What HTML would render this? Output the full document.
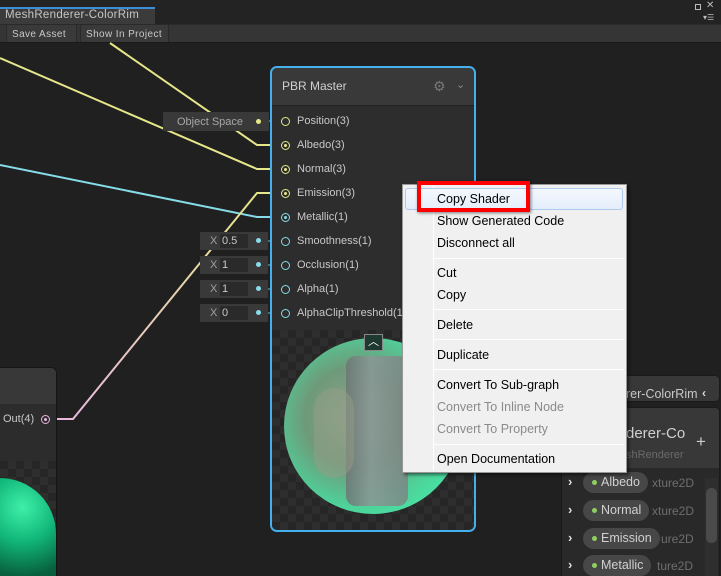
<!DOCTYPE html>
<html><head><meta charset="utf-8"><style>
*{margin:0;padding:0;box-sizing:border-box}
html,body{width:721px;height:576px;overflow:hidden}
body{background:#202020;font-family:"Liberation Sans","DejaVu Sans",sans-serif;position:relative;color:#c4c4c4}
.a{position:absolute}
.port{position:absolute;left:297px;font-size:11px;color:#c8c8c8}
.pc{position:absolute;left:281px;width:9px;height:9px;border-radius:50%;border:1.5px solid #e8e88a}
.pc.c{border-color:#86dde8}
.pc.f::after{content:"";position:absolute;left:1.5px;top:1.5px;width:3px;height:3px;border-radius:50%;background:#e8e88a}
.pc.c.f::after{background:#86dde8}
.inp{position:absolute;left:200px;width:68px;height:18px;background:#393939;font-size:11px;color:#a0a0a0}
.inp span{position:absolute;left:20px;top:2px;width:28px;height:14px;background:#2a2a2a;padding:1px 0 0 2px;color:#c8c8c8}
.inp b{position:absolute;left:10px;top:3px;font-weight:normal}
.inp i{position:absolute;left:56px;top:6px;width:5px;height:5px;border-radius:50%;background:#86dde8}
.mi{position:absolute;left:437px;font-size:12.5px;color:#000}
.mi.d{color:#8a8a8a}
.sep{position:absolute;left:434px;width:190px;height:1px;background:#d6d6d6;border-bottom:1px solid #fff}
.pill{position:absolute;left:583px;height:21px;border-radius:11px;background:#474747;font-size:12.5px;line-height:15px;color:#d0d0d0;padding:3px 8px 0 18px}
.pill::before{content:"";position:absolute;left:9px;top:8px;width:5px;height:5px;border-radius:50%;background:#8ed060}
.chev{position:absolute;left:568px;font-size:13px;line-height:15px;color:#ddd;font-weight:bold}
.ty{position:absolute;font-size:12px;line-height:14px;color:#6e6e6e}
.chk{background-color:#262626;background-image:linear-gradient(45deg,#2e2e2e 25%,transparent 25%,transparent 75%,#2e2e2e 75%),linear-gradient(45deg,#2e2e2e 25%,transparent 25%,transparent 75%,#2e2e2e 75%);background-size:16px 16px;background-position:0 0,8px 8px}
</style></head><body>
<div class="a" style="left:0;top:0;width:721px;height:24px;background:#232323"></div>
<div class="a" style="left:0;top:7px;width:155px;height:17px;background:#3b3b3b;border-top:2px solid #3a8fd6"></div>
<div class="a" style="left:5px;top:9px;font-size:11.5px;color:#c6c6c6;letter-spacing:0.3px">MeshRenderer-ColorRim</div>
<div class="a" style="left:695px;top:4px;width:6px;height:6px;border:1.5px solid #bbb"></div>
<div class="a" style="left:706px;top:0px;font-size:10px;color:#bbb">✕</div>
<div class="a" style="left:703px;top:13px;font-size:8px;color:#bbb">▾☰</div>
<div class="a" style="left:0;top:24px;width:721px;height:19px;background:#353535;border-top:1px solid #2a2a2a;border-bottom:1px solid #1a1a1a"></div>
<div class="a" style="left:6px;top:25px;width:71px;height:17px;background:#3a3a3a;border-left:1px solid #2a2a2a;border-right:1px solid #2a2a2a;font-size:10px;color:#c8c8c8;padding:4px 0 0 5px;letter-spacing:0.4px">Save Asset</div>
<div class="a" style="left:80px;top:25px;width:89px;height:17px;background:#3a3a3a;border-left:1px solid #2a2a2a;border-right:1px solid #2a2a2a;font-size:10px;color:#c8c8c8;padding:4px 0 0 5px;letter-spacing:0.4px">Show In Project</div>

<div class="a" style="left:0;top:367px;width:57px;height:209px;background:#2c2c2c;border:1px solid #151515;border-left:none;border-bottom:none;border-radius:0 6px 0 0;overflow:hidden">
 <div class="a" style="left:0;top:0;width:56px;height:36px;background:#383838"></div>
 <div class="a chk" style="left:0;top:93px;width:56px;height:115px"></div>
 <div class="a" style="left:0;top:110px;width:56px;height:98px;border-radius:0 98px 0 0;background:radial-gradient(circle at 40% 30%,#3ef0a8,#11b678 45%,#08603e 90%)"></div>
</div>
<div class="a" style="left:3px;top:413px;font-size:11px;color:#c8c8c8">Out(4)</div>
<div class="a" style="left:41px;top:415px;width:9px;height:9px;border-radius:50%;border:1.5px solid #e8b8e0"><div class="a" style="left:1.5px;top:1.5px;width:3px;height:3px;border-radius:50%;background:#e8b8e0"></div></div>

<svg class="a" style="left:0;top:0" width="721" height="576">
<defs><linearGradient id="g1" x1="257" y1="192" x2="57" y2="419" gradientUnits="userSpaceOnUse"><stop offset="0" stop-color="#e6e68a"/><stop offset="1" stop-color="#e8b8e0"/></linearGradient></defs>
<g fill="none" stroke-width="2">
<polyline points="110,43 257,145 281,145" stroke="#e6e68a"/>
<polyline points="0,58 257,169 281,169" stroke="#e6e68a"/>
<polyline points="0,165 257,217 281,217" stroke="#86dde8"/>
<polyline points="281,193 257,193 73,419 57,419" stroke="url(#g1)"/>
</g>
<g stroke-width="1.5"><line x1="258" y1="121" x2="281" y2="121" stroke="#8a8a5a"/>
<line x1="258" y1="241" x2="281" y2="241" stroke="#5a8a90"/><line x1="258" y1="265" x2="281" y2="265" stroke="#5a8a90"/><line x1="258" y1="289" x2="281" y2="289" stroke="#5a8a90"/><line x1="258" y1="313" x2="281" y2="313" stroke="#5a8a90"/></g>
</svg>

<div class="a" style="left:270px;top:66px;width:206px;height:466px;border:2px solid #44b0ee;border-radius:7px;background:#2d2d2d;overflow:hidden">
 <div class="a" style="left:0;top:0;width:202px;height:38px;background:#393939;border-bottom:1px solid #222"></div>
 <div class="a chk" style="left:0;top:262px;width:202px;height:200px"></div>
 <div class="a" style="left:12px;top:270px;width:178px;height:176px;border-radius:50%;overflow:hidden;background:radial-gradient(circle at 40% 45%,#8fa08a 0,#6e9a7a 35%,#4ed29a 62%,#46e6a6 82%,#2ab886 100%)">
  <div class="a" style="left:62px;top:18px;width:62px;height:150px;background:linear-gradient(90deg,#6c7674,#8a9896 40%,#7a8683);border-radius:10px;opacity:.85"></div>
  <div class="a" style="left:30px;top:50px;width:40px;height:90px;background:#98a08a;opacity:.45;border-radius:20px"></div>
 </div>
 <div class="a" style="left:92px;top:266px;width:19px;height:17px;background:#1e3a30;border:1px solid #888;color:#fff;font-size:11px;text-align:center;line-height:15px">︿</div>
</div>
<div class="a" style="left:282px;top:79px;font-size:12px;color:#d0d0d0">PBR Master</div>
<div class="a" style="left:433px;top:78px;font-size:14px;color:#777">⚙</div>
<div class="a" style="left:456px;top:78px;font-size:11px;color:#888">⌄</div>

<div class="a" style="left:163px;top:112px;width:106px;height:19px;background:#393939;font-size:11px;color:#a8a8a8;padding:4px 0 0 14px">Object Space</div>
<div class="a" style="left:256px;top:119px;width:5px;height:5px;border-radius:50%;background:#e8e88a"></div>

<div class="pc" style="top:117px"></div><div class="port" style="top:115px">Position(3)</div>
<div class="pc f" style="top:141px"></div><div class="port" style="top:139px">Albedo(3)</div>
<div class="pc f" style="top:165px"></div><div class="port" style="top:163px">Normal(3)</div>
<div class="pc f" style="top:189px"></div><div class="port" style="top:187px">Emission(3)</div>
<div class="pc c f" style="top:213px"></div><div class="port" style="top:211px">Metallic(1)</div>
<div class="pc c" style="top:237px"></div><div class="port" style="top:235px">Smoothness(1)</div>
<div class="pc c" style="top:261px"></div><div class="port" style="top:259px">Occlusion(1)</div>
<div class="pc c" style="top:285px"></div><div class="port" style="top:283px">Alpha(1)</div>
<div class="pc c" style="top:309px"></div><div class="port" style="top:307px">AlphaClipThreshold(1)</div>

<div class="inp" style="top:232px"><b>X</b><span>0.5</span><i></i></div>
<div class="inp" style="top:256px"><b>X</b><span>1</span><i></i></div>
<div class="inp" style="top:280px"><b>X</b><span>1</span><i></i></div>
<div class="inp" style="top:304px"><b>X</b><span>0</span><i></i></div>

<div class="a" style="left:560px;top:375px;width:160px;height:27px;background:#383838;border:1px solid #1a1a1a;border-radius:5px"></div>
<div class="a" style="left:626px;top:387px;font-size:12.5px;color:#c8c8c8">rer-ColorRim</div>
<div class="a" style="left:702px;top:386px;font-size:12px;color:#ddd;font-weight:bold">‹</div>
<div class="a" style="left:561px;top:407px;width:159px;height:169px;background:#292929;border:1px solid #1a1a1a;border-bottom:none;border-radius:5px 5px 0 0;overflow:hidden">
 <div class="a" style="left:0;top:0;width:159px;height:60px;background:#383838"></div>
 <div class="a" style="left:143px;top:70px;width:13px;height:99px;background:#2e2e2e"></div>
 <div class="a" style="left:144px;top:80px;width:11px;height:55px;background:#4a4a4a;border-radius:5px"></div>
</div>
<div class="a" style="left:626px;top:425px;font-size:15px;color:#d0d0d0">derer-Co</div>
<div class="a" style="left:626px;top:449px;font-size:11px;color:#6a6a6a">shRenderer</div>
<div class="a" style="left:696px;top:432px;font-size:17px;color:#ccc">+</div>
<div class="chev" style="top:474px">›</div><div class="pill" style="top:472px">Albedo</div><div class="ty" style="left:652px;top:476px">xture2D</div>
<div class="chev" style="top:502px">›</div><div class="pill" style="top:500px">Normal</div><div class="ty" style="left:652px;top:504px">xture2D</div>
<div class="chev" style="top:530px">›</div><div class="pill" style="top:528px">Emission</div><div class="ty" style="left:661px;top:532px">ure2D</div>
<div class="chev" style="top:557px">›</div><div class="pill" style="top:555px">Metallic</div><div class="ty" style="left:657px;top:559px">ture2D</div>

<div class="a" style="left:402px;top:184px;width:225px;height:289px;background:#f0f0f0;border:1px solid #979797;box-shadow:2px 2px 3px rgba(0,0,0,.5)"></div>
<div class="a" style="left:433px;top:186px;width:1px;height:284px;background:#e0e0e0;border-right:1px solid #fff"></div>
<div class="a" style="left:405px;top:188px;width:218px;height:22px;border:1px solid #aecbee;border-radius:3px;background:linear-gradient(#f4f8fd,#e4eefb)"></div>
<div class="mi" style="top:192px">Copy Shader</div>
<div class="mi" style="top:214px">Show Generated Code</div>
<div class="mi" style="top:236px">Disconnect all</div>
<div class="sep" style="top:258px"></div>
<div class="mi" style="top:266px">Cut</div>
<div class="mi" style="top:288px">Copy</div>
<div class="sep" style="top:309px"></div>
<div class="mi" style="top:318px">Delete</div>
<div class="sep" style="top:339px"></div>
<div class="mi" style="top:348px">Duplicate</div>
<div class="sep" style="top:369px"></div>
<div class="mi" style="top:378px">Convert To Sub-graph</div>
<div class="mi d" style="top:400px">Convert To Inline Node</div>
<div class="mi d" style="top:422px">Convert To Property</div>
<div class="sep" style="top:444px"></div>
<div class="mi" style="top:452px">Open Documentation</div>
<div class="a" style="left:417px;top:181px;width:113px;height:31px;border:4px solid #f00;box-shadow:1px 1px 3px rgba(0,0,0,.5)"></div>
</body></html>
